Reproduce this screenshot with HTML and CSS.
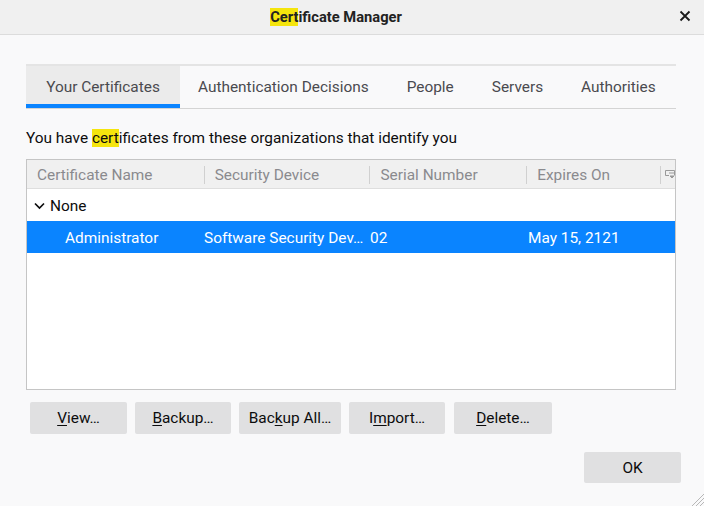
FILE: index.html
```html
<!DOCTYPE html>
<html>
<head>
<meta charset="utf-8">
<link rel="stylesheet" href="styles.css">
</head>
<body>
<div class="window">
  <div class="titlebar">
    <div class="title"><span class="hl">Cert</span>ificate Manager</div>
    <div class="close">
      <svg width="12" height="12" viewBox="0 0 12 12"><path d="M1.5 1.5 L10.5 10.5 M10.5 1.5 L1.5 10.5" stroke="#1a1a1a" stroke-width="1.8" fill="none"/></svg>
    </div>
  </div>
  <div class="content">
    <div class="tabs">
      <div class="tab selected">Your Certificates</div>
      <div class="tab">Authentication Decisions</div>
      <div class="tab">People</div>
      <div class="tab">Servers</div>
      <div class="tab">Authorities</div>
    </div>
    <p class="desc">You have <span class="hl">cert</span>ificates from these organizations that identify you</p>
    <div class="tree">
      <div class="thead">
        <div class="col c1">Certificate Name</div>
        <div class="col c2">Security Device</div>
        <div class="col c3">Serial Number</div>
        <div class="col c4">Expires On</div>
        <div class="picker">
          <svg width="10" height="9" viewBox="0 0 10 9"><path d="M0.5 0.5 H9.5 V5.5 M0.5 0.5 V5.5 H4" stroke="#999" stroke-width="1" fill="none"/><path d="M4 3 H9 M5 6 L7 8 L9 6 Z" stroke="#999" stroke-width="1" fill="#999"/></svg>
        </div>
      </div>
      <div class="row group">
        <svg class="chev" width="11" height="8" viewBox="0 0 11 8"><path d="M1 1.5 L5.5 6 L10 1.5" stroke="#0c0c0d" stroke-width="1.7" fill="none"/></svg>
        <span>None</span>
      </div>
      <div class="row sel">
        <div class="cell d1">Administrator</div>
        <div class="cell d2">Software Security Dev…</div>
        <div class="cell d3">02</div>
        <div class="cell d4">May 15, 2121</div>
      </div>
    </div>
    <div class="actions">
      <button class="btn w97"><u>V</u>iew…</button>
      <button class="btn w96"><u>B</u>ackup…</button>
      <button class="btn w102">Bac<u>k</u>up All…</button>
      <button class="btn w96">I<u>m</u>port…</button>
      <button class="btn w97"><u>D</u>elete…</button>
    </div>
    <div class="footer">
      <button class="btn ok">OK</button>
    </div>
  </div>
  <svg class="grip" width="14" height="14" viewBox="0 0 14 14"><path d="M14 2 L2 14 M14 6 L6 14 M14 10 L10 14" stroke="#b8b8b8" stroke-width="1"/></svg>
</div>
</body>
</html>
```

FILE: styles.css
```css
html, body {
  margin: 0;
  padding: 0;
}
body {
  font-family: Roboto, "Noto Sans", sans-serif;
  color: #0c0c0d;
  background: #f9f9fa;
}
.window {
  width: 704px;
  height: 506px;
  position: relative;
  overflow: hidden;
  background: #f9f9fa;
}
.titlebar {
  height: 34px;
  background: #f0f0f0;
  border-bottom: 1px solid #dcdcdc;
  display: flex;
  align-items: center;
  justify-content: center;
  position: relative;
  padding-right: 32px;
}
.title {
  font-size: 14.7px;
  font-weight: 700;
  color: #222;
}
.hl {
  background: #f5e50d;
}
.close {
  position: absolute;
  right: 13px;
  top: 10px;
  width: 12px;
  height: 12px;
}
.close svg { display: block; }
.content {
  padding: 29px 28px 0 26px;
}
.tabs {
  display: flex;
  border-top: 2px solid #e4e4e4;
  border-bottom: 1px solid #d4d4d4;
  height: 42px;
  overflow: hidden;
}
.tab {
  font-size: 15.4px;
  color: #4a4a4f;
  display: flex;
  align-items: center;
  height: 42px;
  box-sizing: border-box;
  white-space: nowrap;
  flex-shrink: 0;
}
.tab.selected {
  background: #ebebeb;
  border-bottom: 4px solid #0a84ff;
  padding-top: 4px;
  width: 154px;
  justify-content: center;
}
.tab:nth-child(2) { padding-left: 18px; padding-right: 19px; }
.tab:nth-child(3) { padding-left: 19px; padding-right: 19px; }
.tab:nth-child(4) { padding-left: 19px; padding-right: 19px; }
.tab:nth-child(5) { padding-left: 19px; padding-right: 19px; }
.desc {
  margin: 0;
  font-size: 15.4px;
  line-height: 18px;
  padding-top: 20px;
  color: #0c0c0d;
}
.tree {
  margin-top: 12px;
  height: 231px;
  border: 1px solid #c5c5c5;
  background: #fff;
  box-sizing: border-box;
  width: 650px;
}
.thead {
  height: 29px;
  background: #f0f0f0;
  border-bottom: 1px solid #dedede;
  display: flex;
  align-items: center;
  font-size: 15.4px;
  color: #8a8a8e;
  box-sizing: border-box;
  padding-top: 1px;
}
.col {
  height: 18px;
  line-height: 18px;
  padding-left: 10px;
  box-sizing: border-box;
  white-space: nowrap;
}
.c1 { width: 177px; }
.c2 { width: 166px; border-left: 1px solid #d0d0d0; }
.c3 { width: 157px; border-left: 1px solid #d0d0d0; }
.c4 { width: 134px; border-left: 1px solid #d0d0d0; }
.picker {
  border-left: 1px solid #d0d0d0;
  height: 18px;
  display: flex;
  align-items: center;
  padding-left: 4px;
}
.row {
  height: 32px;
  display: flex;
  align-items: center;
  font-size: 15.4px;
  padding-top: 1px;
  box-sizing: border-box;
}
.group {
  padding-left: 7px;
}
.chev { margin-right: 5px; }
.sel {
  background: #0a84ff;
  color: #fff;
}
.cell { white-space: nowrap; }
.d1 { width: 177px; padding-left: 38px; box-sizing: border-box; }
.d2 { width: 166px; }
.d3 { width: 158px; }
.d4 { width: 134px; }
.actions {
  display: flex;
  gap: 8px;
  padding-left: 4px;
  margin-top: 12px;
}
.btn {
  font-family: Roboto, "Noto Sans", sans-serif;
  font-size: 15.4px;
  color: #0c0c0d;
  background: #e0e0e1;
  border: none;
  border-radius: 2px;
  height: 32px;
  padding: 0;
  margin: 0;
}
.btn u { text-underline-offset: 2px; }
.w97 { width: 97px; }
.w96 { width: 96px; }
.w102 { width: 102px; }
.actions .btn:nth-child(5) { width: 98px; margin-left: 1px; }
.footer {
  display: flex;
  justify-content: flex-end;
  margin-top: 18px;
  margin-right: -5px;
}
.ok {
  width: 97px;
  height: 31px;
}
.grip {
  position: absolute;
  right: 0;
  bottom: 0;
}
```
